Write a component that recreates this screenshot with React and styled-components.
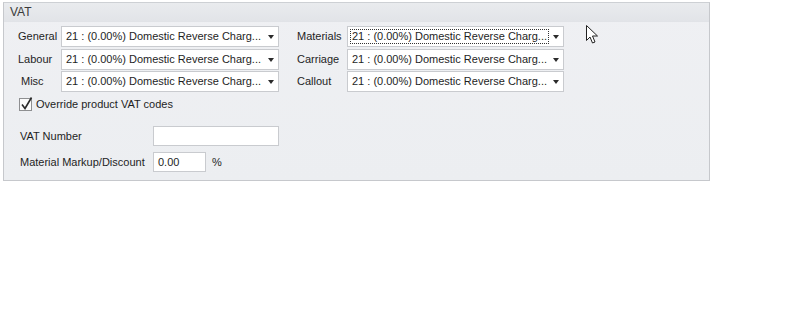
import React from "react";
import styled, { createGlobalStyle } from "styled-components";

const Global = createGlobalStyle`
  html, body { margin: 0; padding: 0; background: #ffffff; }
  body { font-family: "Liberation Sans", Arial, sans-serif; }
  #root { width: 788px; height: 328px; position: relative; overflow: hidden; }
`;

const Page = styled.div`
  padding: 2px 0 0 3px;
  height: 328px;
  box-sizing: border-box;
`;

const Panel = styled.section`
  width: 707px;
  height: 179px;
  box-sizing: border-box;
  border: 1px solid #c6c8cc;
  border-top-color: #cdd0d4;
  background: linear-gradient(#eff0f3, #eceef1);
  display: flex;
  flex-direction: column;
`;

const Header = styled.div`
  height: 18px;
  background: linear-gradient(#e9ebee, #e2e4e8);
  border-bottom: 1px solid #e1e3e7;
  display: flex;
  align-items: center;
  padding-left: 6px;
  font-size: 12px;
  color: #3a3a3a;
`;

const Body = styled.div`
  padding: 4px 0 0 0;
  display: flex;
  flex-direction: column;
`;

const ComboGrid = styled.div`
  display: grid;
  grid-template-columns: 57px 218px 18px 50px 217px;
  grid-template-rows: 23px 22px 21px;
  align-items: start;
`;

const Label = styled.span`
  font-size: 11px;
  color: #1e1e1e;
  padding-left: ${(p) => p.$pad || 0}px;
  white-space: nowrap;
  line-height: 21px;
`;

const Spacer = styled.span``;

const Combo = styled.div`
  height: 21px;
  box-sizing: border-box;
  background: #ffffff;
  border: 1px solid #c9cbcf;
  display: flex;
  align-items: center;
  padding: 0 0 0 2px;
`;

const ComboText = styled.span`
  flex: 1;
  font-size: 11px;
  color: #1e1e1e;
  white-space: nowrap;
  padding: 0 1px;
  border: 1px dotted ${(p) => (p.$focus ? "#333" : "transparent")};
  line-height: 13px;
`;

const Arrow = styled.span`
  width: 18px;
  display: flex;
  justify-content: center;
  align-items: center;
  &::after {
    content: "";
    border-left: 3.5px solid transparent;
    border-right: 3.5px solid transparent;
    border-top: 4px solid #2b2b2b;
  }
`;

const CheckRow = styled.label`
  display: flex;
  align-items: center;
  margin: 5px 0 0 15px;
  gap: 4px;
  height: 15px;
`;

const CheckBox = styled.span`
  width: 11px;
  height: 11px;
  border: 1px solid #8e8f91;
  background: #fbfbfb;
  position: relative;
  display: inline-block;
  svg { position: absolute; left: 0px; top: -3px; }
`;

const FieldRow = styled.div`
  display: flex;
  align-items: center;
  margin: ${(p) => p.$top}px 0 0 16px;
  height: 20px;
`;

const FieldLabel = styled(Label)`
  width: 133px;
`;

const TextBox = styled.div`
  width: ${(p) => p.$w}px;
  height: 20px;
  box-sizing: border-box;
  border: 1px solid #c9cbcf;
  background: #fff;
  font-size: 11px;
  color: #1e1e1e;
  display: flex;
  align-items: center;
  padding-left: 4px;
`;

const Unit = styled(Label)`
  margin-left: 6px;
`;

const Cursor = styled.svg`
  position: absolute;
  left: 586px;
  top: 25px;
`;

const VALUE = "21 : (0.00%) Domestic Reverse Charg...";

function ComboBox({ focus }) {
  return (
    <Combo>
      <ComboText $focus={focus}>{VALUE}</ComboText>
      <Arrow />
    </Combo>
  );
}

export default function App() {
  return (
    <>
      <Global />
      <Page>
        <Panel>
          <Header>VAT</Header>
          <Body>
            <ComboGrid>
              <Label $pad={14}>General</Label>
              <ComboBox />
              <Spacer />
              <Label>Materials</Label>
              <ComboBox focus />
              <Label $pad={14}>Labour</Label>
              <ComboBox />
              <Spacer />
              <Label>Carriage</Label>
              <ComboBox />
              <Label $pad={17}>Misc</Label>
              <ComboBox />
              <Spacer />
              <Label>Callout</Label>
              <ComboBox />
            </ComboGrid>
            <CheckRow>
              <CheckBox>
                <svg width="13" height="15" viewBox="0 0 13 15">
                  <path d="M2 8.5 L5 12.5 L11.5 1.5" fill="none" stroke="#2a2a2a" strokeWidth="1.6" />
                </svg>
              </CheckBox>
              <Label>Override product VAT codes</Label>
            </CheckRow>
            <FieldRow $top={14}>
              <FieldLabel>VAT Number</FieldLabel>
              <TextBox $w={126} />
            </FieldRow>
            <FieldRow $top={6}>
              <FieldLabel>Material Markup/Discount</FieldLabel>
              <TextBox $w={53}>0.00</TextBox>
              <Unit>%</Unit>
            </FieldRow>
          </Body>
        </Panel>
      </Page>
      <Cursor width="14" height="20" viewBox="0 0 14 20">
        <path d="M0.5 0.5 L0.5 15.5 L4 12 L6.5 18 L9 17 L6.5 11 L11.5 11 Z" fill="#fff" stroke="#222" strokeWidth="1" strokeLinejoin="round" />
      </Cursor>
    </>
  );
}
